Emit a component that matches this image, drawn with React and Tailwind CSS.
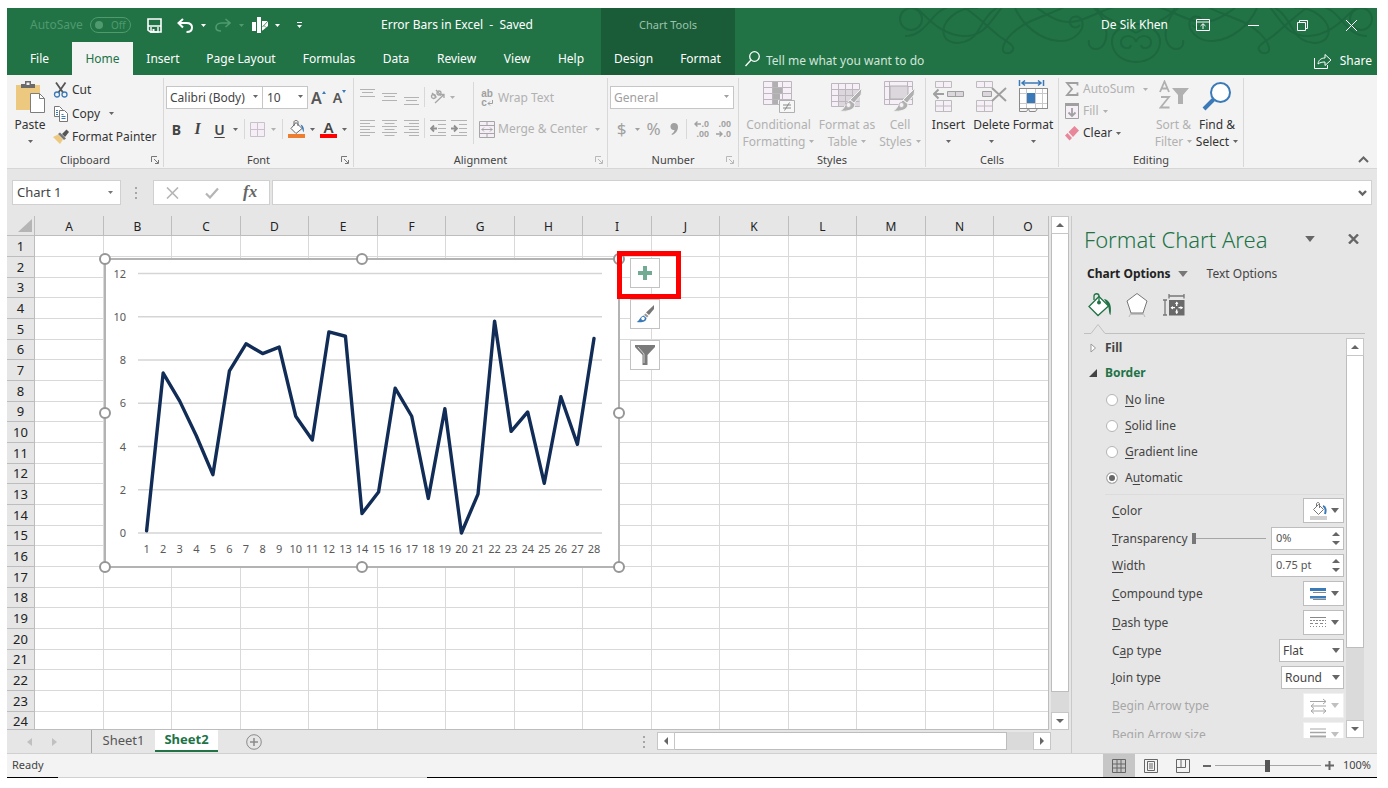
import { useState } from 'react'

const tabs = [
  { name: 'File', width: 'w-[65px]' },
  { name: 'Home', width: 'w-[61px]' },
  { name: 'Insert', width: 'w-[60px]' },
  { name: 'Page Layout', width: 'w-[96px]' },
  { name: 'Formulas', width: 'w-[80px]' },
  { name: 'Data', width: 'w-[54px]' },
  { name: 'Review', width: 'w-[67px]' },
  { name: 'View', width: 'w-[54px]' },
  { name: 'Help', width: 'w-[54px]' },
]

const columns = 'ABCDEFGHIJKLMNO'.split('')
const rows = Array.from({ length: 24 }, (_, i) => i + 1)

const series = [
  0.1, 7.4, 6.1, 4.5, 2.7, 7.5, 8.75, 8.3, 8.6, 5.4, 4.3, 9.3, 9.1, 0.9,
  1.9, 6.7, 5.4, 1.6, 5.75, 0, 1.8, 9.8, 4.7, 5.6, 2.3, 6.3, 4.1, 9,
]

const Caret = ({ className = 'text-[#666666]' }) => (
  <svg width="5" height="3" viewBox="0 0 5 3" className={`shrink-0 ${className}`}>
    <path d="M0 0h5L2.5 3z" fill="currentColor" />
  </svg>
)

const BigCaret = ({ className = 'text-[#666666]' }) => (
  <svg width="8" height="5" viewBox="0 0 8 5" className={`shrink-0 ${className}`}>
    <path d="M0 0h8L4 5z" fill="currentColor" />
  </svg>
)

/* ---------- Title bar ---------- */

const Swirls = () => (
  <svg width="482" height="56" viewBox="892 8 482 56" fill="none" stroke="#1d673e" strokeWidth="2" className="absolute right-0 top-0">
    <defs>
      <g id="swirl">
        <circle cx="908" cy="19" r="11" />
        <path d="M902 36C925 36 928 8 950 6" />
        <path d="M912 8c8 2 20 26 48 28 22 1 28-16 40-30" />
        <path d="M975 8c-20-2-38 14-34 27 4 12 26 10 34-4 6-10 10-18 20-24" />
        <path d="M962 8c10 6 24 20 34 28 10 7 16 10 14 14-3 5-11 4-10-2 1-8 12-20 28-27 16-7 28-10 36-16" />
        <path d="M1012 8c8 18 26 32 44 33 16 1 26-12 23-20-3-7-13-5-12 2 1 5 7 6 10 2" />
        <path d="M1034 8c14 10 26 18 44 12 14-5 22-10 36-14" />
        <path d="M1094 8c6 12 26 16 39 25" />
        <path d="M1086 40c-2 10 10 12 15 4 6-10 0-28-10-36" />
        <path d="M1133 42c-2-8-16-8-15 1 1 6 9 7 10 2M1133 24c-14 0-25 8-24 19 1 12 12 19 24 19" />
      </g>
    </defs>
    <use href="#swirl" />
    <use href="#swirl" transform="translate(2266 0) scale(-1 1)" />
  </svg>
)

const QuickAccess = () => (
  <div className="flex items-center h-[34px] pl-[23px] pr-[68px] text-white">
    <span className="text-[#4f9a6e]">AutoSave</span>
    <button aria-label="AutoSave off" className="ml-[7px] flex items-center w-[41px] h-4 rounded-full border border-[#4f9a6e] px-1 text-[10px] text-[#4f9a6e]">
      <span className="w-2 h-2 rounded-full bg-[#4f9a6e] mr-2" />
      Off
    </button>
    <button aria-label="Save" className="ml-4">
      <svg width="15" height="15" viewBox="0 0 15 15">
        <path d="M1 1h13v13H3.500L1 12z" fill="none" stroke="white" strokeWidth="1.600" />
        <path d="M1 8h13M4 9v5h7V9" fill="none" stroke="white" strokeWidth="1.400" />
        <path d="M5.500 11h2v3h-2z" fill="white" />
      </svg>
    </button>
    <button aria-label="Undo" className="ml-[15px]">
      <svg width="16" height="15" viewBox="0 0 16 15" fill="none" stroke="white" strokeWidth="2">
        <path d="M6 1L1.500 5 6 9.500M2 5h7.500C13 5 15 7 15 9.500S13 14 9.500 14" />
      </svg>
    </button>
    <Caret className="ml-2 text-white" />
    <button aria-label="Redo" className="ml-[9px]">
      <svg width="16" height="15" viewBox="0 0 16 15" fill="none" stroke="#4f9a6e" strokeWidth="1.600">
        <path d="M10.500 1L15 5l-4.500 4M14 5H6.500C3 5 1 7 1 9.500S3 13 6 13" />
      </svg>
    </button>
    <Caret className="ml-2 text-[#4f9a6e]" />
    <button aria-label="Chart" className="ml-2">
      <svg width="17" height="16" viewBox="0 0 17 16" fill="white">
        <path d="M0 5h4v9H0zM5 0h4v16H5zM10 4h6v5l-6 5z" />
        <path d="M10.500 10l5.500-6M12 8.500l2 2M10 14h5" stroke="#217346" strokeWidth=".8" />
      </svg>
    </button>
    <Caret className="ml-[6px] text-white" />
    <svg width="5" height="6" viewBox="0 0 5 6" fill="white" className="ml-[17px]">
      <path d="M0 0h5v1H0zM0 3h5L2.500 6z" />
    </svg>
    <span className="ml-auto whitespace-pre">Error Bars in Excel  -  Saved</span>
  </div>
)

const Header = () => (
  <header className="flex h-[67px] shrink-0 bg-[#217346] text-white">
    <div className="w-[594px] shrink-0">
      <QuickAccess />
      <nav className="flex h-[33px]">
        {tabs.map((tab) => (
          <button
            key={tab.name}
            className={`${tab.width} shrink-0 ${tab.name === 'Home' ? 'bg-[#f3f3f3] text-[#217346]' : ''}`}
          >
            {tab.name}
          </button>
        ))}
      </nav>
    </div>

    {/* Contextual chart tabs */}
    <div className="w-[134px] shrink-0 bg-[#1a5c38]">
      <div className="h-[34px] leading-[33px] text-center text-[11px] text-[#9cc3ac]">Chart Tools</div>
      <nav className="flex h-[33px]">
        <button className="w-[65px]">Design</button>
        <button className="w-[69px]">Format</button>
      </nav>
    </div>

    <div className="relative flex-1 min-w-0">
      <Swirls />
      <div className="relative flex items-center justify-end h-[34px] pr-5 gap-[38px]">
        <span className="-mr-[10px]">De Sik Khen</span>
        <button aria-label="Ribbon display options">
          <svg width="14" height="12" viewBox="0 0 14 12" fill="none" stroke="white">
            <path d="M.5.5h13v11H.500zM.5 3h13M7 10V5M4.500 7L7 4.700 9.500 7" />
          </svg>
        </button>
        <button aria-label="Minimize">
          <svg width="11" height="11" viewBox="0 0 11 11" stroke="white"><path d="M0 5.500h11" /></svg>
        </button>
        <button aria-label="Restore">
          <svg width="11" height="11" viewBox="0 0 11 11" fill="none" stroke="white">
            <path d="M.5 2.500h8v8h-8zM2.500 2.500v-2h8v8h-2" />
          </svg>
        </button>
        <button aria-label="Close">
          <svg width="11" height="11" viewBox="0 0 11 11" stroke="white"><path d="M0 0l11 11M11 0L0 11" /></svg>
        </button>
      </div>
      <div className="relative flex items-center h-[33px] pl-[10px] pr-[5px]">
        <svg width="15" height="16" viewBox="0 0 15 16" fill="none" stroke="white" strokeWidth="1.300">
          <circle cx="9.500" cy="5.500" r="4.800" />
          <path d="M6 9L.5 15" />
        </svg>
        <span className="ml-[6px] pt-1 text-[#d3e5da]">Tell me what you want to do</span>
        <button className="ml-auto flex items-center gap-2 pt-1">
          <svg width="18" height="16" viewBox="0 0 18 16" fill="none" stroke="white">
            <path d="M.5 5v10.500h13V12M4 11c.5-4 3-6 7-6V1.500L17 7l-6 5.500V9c-3 0-5 .5-7 2z" />
          </svg>
          Share
        </button>
      </div>
    </div>
  </header>
)

/* ---------- Ribbon ---------- */

const Group = ({ label, width, launcher, dim, children }) => (
  <section className={`${width} relative shrink-0 flex flex-col h-[89px] border-r border-[#d8d8d8]`}>
    <div className="flex-1 flex">{children}</div>
    <div className="h-[14px] leading-[14px] text-center text-[11px] text-[#444444]">{label}</div>
    {launcher && (
      <button aria-label={`${label} settings`} className="absolute right-1 bottom-[3px]">
        <svg width="8" height="8" viewBox="0 0 8 8" fill="none" stroke={dim ? '#b8b8b8' : '#777777'}>
          <path d="M.5 6V.500H6M3 3l4 4M7.500 4v3.500H4" />
        </svg>
      </button>
    )}
  </section>
)

const BigButton = ({ icon, lines, width, disabled, caretBelow }) => (
  <button className={`${width} shrink-0 flex flex-col items-center pt-[2px] leading-[17px] ${disabled ? 'text-[#b1b1b1]' : 'text-[#333333]'}`}>
    <span className="h-[36px]">{icon}</span>
    <span className="whitespace-nowrap">{lines[0]}</span>
    {caretBelow ? (
      <span className="flex items-center h-[17px]"><Caret /></span>
    ) : (
      <span className="flex items-center gap-1 whitespace-nowrap">
        {lines[1]}
        <Caret className={disabled ? 'text-[#b1b1b1]' : 'text-[#666666]'} />
      </span>
    )}
  </button>
)

const Divider = ({ className }) => <span className={`w-px bg-[#d8d8d8] shrink-0 ${className}`} />

const Lines = ({ d }) => (
  <svg width="15" height="18" viewBox="0 0 15 18" fill="none" stroke="#b3b3b3" className="shrink-0">
    <path d={d} />
  </svg>
)

const ClipboardGroup = () => (
  <Group label="Clipboard" width="w-[157px]" launcher>
    <BigButton
      width="w-[46px]"
      lines={['Paste']}
      caretBelow
      icon={
        <svg width="32" height="34" viewBox="0 0 32 34">
          <path d="M2 5h24v25H2z" fill="#edc87f" />
          <path d="M7 4h4V1h6v3h4v4H7z" fill="#6b6b6b" />
          <path d="M12.500 2.500h3V5h-3z" fill="#f3f3f3" />
          <path d="M16.500 13.500h9l5 5v14h-14z" fill="white" stroke="#7d7d7d" />
          <path d="M25.500 13.500v5h5" fill="none" stroke="#7d7d7d" />
        </svg>
      }
    />
    <div className="flex flex-col text-[#333333]">
      <button className="flex items-center gap-[3px] h-6">
        <svg width="16" height="16" viewBox="0 0 16 16" fill="none">
          <path d="M3 .5l7 10M12.500.500l-7 10" stroke="#555555" strokeWidth="1.800" />
          <circle cx="4" cy="12.500" r="2.500" stroke="#3b7ab8" strokeWidth="1.300" />
          <circle cx="11.500" cy="12.500" r="2.500" stroke="#3b7ab8" strokeWidth="1.300" />
        </svg>
        Cut
      </button>
      <button className="flex items-center gap-[3px] h-[23px]">
        <svg width="16" height="16" viewBox="0 0 16 16" fill="white" stroke="#777777">
          <path d="M1.500.500h5l3 3v7h-8z" />
          <path d="M6.500 4.500h5l3 3v8h-8z" />
          <path d="M3 4.500h2M3 6.500h2M3 8.500h2M8.500 8.500h2M8.500 10.500h4M8.500 12.500h4" stroke="#3b7ab8" />
        </svg>
        Copy
        <Caret className="ml-[6px] text-[#666666]" />
      </button>
      <button className="flex items-center gap-[3px] h-6">
        <svg width="16" height="16" viewBox="0 0 16 16">
          <path d="M0 8l5-2.500 5 5L7 15z" fill="#edc87f" />
          <path d="M5 5l2-1.500 6 6L11 11z" fill="#777777" />
          <path d="M9 5l4.500-4.500L16 3l-4 5z" fill="#555555" />
        </svg>
        Format Painter
      </button>
    </div>
  </Group>
)

const FontGroup = () => (
  <Group label="Font" width="w-[190px]" launcher>
    <div className="pl-[2px] pt-2 w-full">
      <div className="flex items-center h-[23px]">
        <div className="relative">
          <select aria-label="Font" className="appearance-none w-[97px] h-[23px] pl-[3px] bg-white border border-[#c6c6c6] text-[#444444]">
            <option>Calibri (Body)</option>
          </select>
          <Caret className="absolute right-[5px] top-[9px] text-[#666666]" />
        </div>
        <div className="relative -ml-px">
          <select aria-label="Font size" className="appearance-none w-[46px] h-[23px] pl-1 bg-white border border-[#c6c6c6] text-[#444444]">
            <option>10</option>
          </select>
          <Caret className="absolute right-[5px] top-[9px] text-[#666666]" />
        </div>
        <button aria-label="Increase font size" className="ml-[3px] flex font-semibold text-[16px] leading-[22px] text-[#555555]">
          A
          <svg width="4" height="3" viewBox="0 0 4 3" className="mt-1"><path d="M0 3h4L2 0z" fill="#3b7ab8" /></svg>
        </button>
        <button aria-label="Decrease font size" className="ml-[7px] flex font-semibold text-[14px] leading-[24px] text-[#555555]">
          A
          <svg width="4" height="3" viewBox="0 0 4 3" className="mt-1"><path d="M0 0h4L2 3z" fill="#3b7ab8" /></svg>
        </button>
      </div>
      <div className="flex items-center h-[22px] mt-[9px] text-[14px] text-[#444444]">
        <button className="ml-[5px] w-[11px] font-bold">B</button>
        <button className="ml-[10px] w-[11px] font-bold italic font-['Liberation_Serif'] text-[16px]">I</button>
        <button className="ml-[11px] w-[11px] font-semibold underline underline-offset-2">U</button>
        <Caret className="ml-2 text-[#666666]" />
        <Divider className="ml-[6px] h-5" />
        <svg width="15" height="15" viewBox="0 0 15 15" fill="#f5eef7" stroke="#c9c0cb" className="ml-[5px]">
          <path d="M.5.500h14v14H.500zM7.500.500v14M.5 7.500h14" />
        </svg>
        <Caret className="ml-[6px] text-[#b1b1b1]" />
        <Divider className="ml-[6px] h-5" />
        <button aria-label="Fill color" className="ml-[5px]">
          <svg width="17" height="18" viewBox="0 0 17 18">
            <path d="M8 2.500l6 6-6 5-5-5z" fill="white" stroke="#666666" />
            <path d="M6 6V2c0-2 4-2 4 0v4" fill="none" stroke="#666666" />
            <path d="M12.500 4.500c3 1 4 4 3 8-1-2-1-4-3-8z" fill="#3b7ab8" />
            <path d="M0 14h17v4H0z" fill="#ed7d31" />
          </svg>
        </button>
        <Caret className="ml-[5px] text-[#666666]" />
        <button aria-label="Font color" className="ml-[5px] flex flex-col items-center w-[17px]">
          <span className="font-semibold text-[15px] leading-[14px]">A</span>
          <span className="w-[17px] h-1 bg-[#ff0000]" />
        </button>
        <Caret className="ml-[5px] text-[#666666]" />
      </div>
    </div>
  </Group>
)

const AlignmentGroup = () => (
  <Group label="Alignment" width="w-[254px]" launcher dim>
    <div className="flex flex-col gap-[13px] pl-[6px] pt-[10px]">
      <div className="flex items-center h-[18px] gap-[5px]">
        <div className="flex gap-[7px]">
          <Lines d="M0 1.500h15M2 4.500h11M0 8.500h15" />
          <Lines d="M0 5.500h15M2 8.500h11M0 12.500h15" />
          <Lines d="M0 9.500h15M2 12.500h11M0 16.500h15" />
        </div>
        <Divider className="h-5" />
        <svg width="15" height="16" viewBox="0 0 15 16" fill="none" stroke="#a6a6a6" strokeWidth="1.300" className="shrink-0">
          <circle cx="3.500" cy="7.500" r="2" />
          <path d="M2 4l4.500 4.500M6 1l5 5.500" />
          <circle cx="9" cy="4" r="2" />
          <path d="M5 14l9-8.500M14 9V5.500h-3.500" />
        </svg>
        <Caret className="text-[#b1b1b1]" />
      </div>
      <div className="flex items-center h-[18px] gap-[5px]">
        <div className="flex gap-[7px]">
          <Lines d="M0 1.500h15M0 4.500h10M0 7.500h15M0 10.500h10M0 13.500h15M0 16.500h10" />
          <Lines d="M0 1.500h15M2.500 4.500h10M0 7.500h15M2.500 10.500h10M0 13.500h15M2.500 16.500h10" />
          <Lines d="M0 1.500h15M5 4.500h10M0 7.500h15M5 10.500h10M0 13.500h15M5 16.500h10" />
        </div>
        <Divider className="h-5" />
        <svg width="16" height="18" viewBox="0 0 16 18" fill="none" stroke="#b3b3b3" className="shrink-0">
          <path d="M0 1.500h16M8 5.500h8M8 9.500h8M8 13.500h8M0 16.500h16" />
          <path d="M1 9.500h6M4 6.500L1 9.500l3 3" stroke="#8f8f8f" strokeWidth="1.800" />
        </svg>
        <svg width="16" height="18" viewBox="0 0 16 18" fill="none" stroke="#b3b3b3" className="shrink-0">
          <path d="M0 1.500h16M8 5.500h8M8 9.500h8M8 13.500h8M0 16.500h16" />
          <path d="M0 9.500h6M3 6.500l3 3-3 3" stroke="#8f8f8f" strokeWidth="1.800" />
        </svg>
      </div>
    </div>
    <Divider className="mt-1 ml-[6px] h-[62px]" />
    <div className="flex flex-col gap-[11px] pl-[5px] pt-[10px] text-[#b1b1b1]">
      <button className="flex items-center h-5 gap-[3px]">
        <span className="w-4 flex flex-col items-center font-['Liberation_Sans'] text-[10px] font-bold leading-[9px] text-[#a0a0a0]">
          <span>ab</span>
          <span className="flex items-center">
            c
            <svg width="6" height="6" viewBox="0 0 6 6" fill="none" stroke="#a0a0a0"><path d="M5.500 0v3.500H1M3 1.500l-2 2 2 2" /></svg>
          </span>
        </span>
        Wrap Text
      </button>
      <button className="flex items-center h-5 gap-[3px] whitespace-nowrap">
        <svg width="16" height="17" viewBox="0 0 16 17" fill="#f5eef7" stroke="#a6a6a6">
          <path d="M.5.500h15v16H.500zM.5 4.500h15M.5 12.500h15M8 .5v4M8 12.500v4" />
          <path d="M2.500 8.500h11M5 6.500l-2 2 2 2M11 6.500l2 2-2 2" fill="none" />
        </svg>
        Merge &amp; Center
        <Caret className="ml-1 text-[#b1b1b1]" />
      </button>
    </div>
  </Group>
)

const NumberGroup = () => (
  <Group label="Number" width="w-[131px]" launcher dim>
    <div className="pl-[2px] pt-2 w-full">
      <div className="relative w-[124px]">
        <select aria-label="Number format" className="appearance-none w-full h-[23px] pl-[3px] bg-white border border-[#c6c6c6] text-[#a0a0a0]">
          <option>General</option>
        </select>
        <Caret className="absolute right-[5px] top-[9px] text-[#a0a0a0]" />
      </div>
      <div className="flex items-center h-[22px] mt-[9px] text-[17px] text-[#a0a0a0]">
        <button className="ml-[6px] w-[11px]">$</button>
        <Caret className="ml-2 text-[#a0a0a0]" />
        <button className="ml-[5px] w-[17px]">%</button>
        <button aria-label="Comma style" className="ml-2">
          <svg width="8" height="12" viewBox="0 0 8 12" fill="#a0a0a0">
            <path d="M4 0c2.500 0 4 1.500 4 4 0 4-3 7-6 8l-.5-1C3 10 4.500 8.500 4.500 7 2 7.500.5 6 .5 3.500.5 1.500 2 0 4 0z" />
          </svg>
        </button>
        <Divider className="ml-2 h-5" />
        <button aria-label="Increase decimal" className="ml-[6px] w-4 flex flex-col items-end font-['Liberation_Sans'] text-[9px] font-bold leading-[10px]">
          <span className="flex items-center">
            <svg width="7" height="6" viewBox="0 0 7 6" fill="none" stroke="#a0a0a0" strokeWidth="1.400"><path d="M1 3h6M3.500.500L1 3l2.500 2.500" /></svg>
            .0
          </span>
          <span>.00</span>
        </button>
        <button aria-label="Decrease decimal" className="ml-[6px] w-4 flex flex-col items-end font-['Liberation_Sans'] text-[9px] font-bold leading-[10px]">
          <span>.00</span>
          <span className="flex items-center">
            <svg width="7" height="6" viewBox="0 0 7 6" fill="none" stroke="#a0a0a0" strokeWidth="1.400"><path d="M0 3h6M3.500.500L6 3 3.500 5.500" /></svg>
            .0
          </span>
        </button>
      </div>
    </div>
  </Group>
)

const Brush = () => (
  <>
    <path d="M31 8l-1 7-7 8-4-3z" fill="#b0b0b0" stroke="#f3f3f3" />
    <path d="M19 20l5 4c0 6-8 8-15 7 5-2 5-8 10-11z" fill="#b0b0b0" stroke="#f3f3f3" />
    <circle cx="17.500" cy="25" r="2.500" fill="#f3f3f3" />
  </>
)

const StylesGroup = () => (
  <Group label="Styles" width="w-[187px]">
    <BigButton
      width="w-[79px]"
      disabled
      lines={['Conditional', 'Formatting']}
      icon={
        <svg width="32" height="33" viewBox="0 0 32 33" fill="#f7eff8" stroke="#bdb6be">
          <path d="M.5 1.500h28v23H.500zM.5 7.500h28M.5 13.500h28M.5 19.500h28M9.500 1.500v23M19.500 1.500v23" />
          <path d="M10 2h5v5h-5zM10 8h9v5h-9zM10 14h7v5h-7zM10 20h5v4h-5z" fill="#b0b0b0" stroke="none" />
          <path d="M16.500 20.500h15v12h-15z" fill="#f7f7f7" stroke="#b0b0b0" />
          <path d="M20 25h8M20 28h8M26.500 22.500l-5 8" stroke="#888888" />
        </svg>
      }
    />
    <BigButton
      width="w-[58px]"
      disabled
      lines={['Format as', 'Table']}
      icon={
        <svg width="32" height="33" viewBox="0 0 32 33" fill="#f7eff8" stroke="#bdb6be">
          <path d="M.5 3.500h28v23H.500z" />
          <path d="M8 9h21v17H8z" fill="#dcd6dd" stroke="none" />
          <path d="M.5 9.500h28M.5 15.500h28M.5 21.500h28M7.500 3.500v23M14.500 3.500v23M21.500 3.500v23" fill="none" />
          <Brush />
        </svg>
      }
    />
    <BigButton
      width="w-[48px]"
      disabled
      lines={['Cell', 'Styles']}
      icon={
        <svg width="32" height="33" viewBox="0 0 32 33" fill="#f7eff8" stroke="#bdb6be">
          <path d="M.5 1.500h28v23H.500zM.5 6.500h28M.5 19.500h28M5.500 1.500v23M23.500 1.500v23" />
          <path d="M6 6h18v13H6z" fill="#dcd6dd" stroke="#b0b0b0" />
          <Brush />
        </svg>
      }
    />
  </Group>
)

const CellsGroup = () => (
  <Group label="Cells" width="w-[133px]">
    <BigButton
      width="w-[45px]"
      lines={['Insert']}
      caretBelow
      icon={
        <svg width="31" height="33" viewBox="0 0 31 33" fill="#f7eff8" stroke="#bcbcbc">
          <path d="M2.500 1.500h16v6h-16zM10.500 1.500v6M2.500 20.500h16v11h-16zM10.500 20.500v11M2.500 26h16" />
          <path d="M14.500 11.500h16v5h-16zM22.500 11.500v5" fill="#dcd6dd" stroke="#a0a0a0" />
          <path d="M1 14h10M5.500 9.500L1 14l4.500 4.500" fill="none" stroke="#a0a0a0" strokeWidth="2" />
        </svg>
      }
    />
    <BigButton
      width="w-[41px]"
      lines={['Delete']}
      caretBelow
      icon={
        <svg width="31" height="33" viewBox="0 0 31 33" fill="#f7eff8" stroke="#bcbcbc">
          <path d="M.5 1.500h16v6h-16zM8.500 1.500v6M.5 20.500h16v11h-16zM8.500 20.500v11M.5 26h16" />
          <path d="M6.500 11.500h9v5h-9z" fill="#dcd6dd" stroke="#a0a0a0" />
          <path d="M16 8l14 13M30 8L16 21" fill="none" stroke="#a0a0a0" strokeWidth="2" />
        </svg>
      }
    />
    <BigButton
      width="w-[42px]"
      lines={['Format']}
      caretBelow
      icon={
        <svg width="31" height="33" viewBox="0 0 31 33" fill="white" stroke="#8a8a8a">
          <path d="M1.500 8.500h28v20h-28z" />
          <path d="M1.500 13.500h28M1.500 23.500h28M8.500 8.500v20M17.500 8.500v20M24.500 8.500v20" stroke="#c8c8c8" />
          <path d="M1.500 8.500h28v20h-28zM1.500 28.500v3h7l2-3 1 3h6l2-3" fill="none" />
          <path d="M9 13h8v10H9z" fill="#3b7ab8" stroke="none" />
          <path d="M1.500 0v6M25.500 0v6M4 3h19M7 .5L4 3l3 2.500M20 .5L23 3l-3 2.500" fill="none" stroke="#3b7ab8" strokeWidth="1.500" />
        </svg>
      }
    />
  </Group>
)

const EditingGroup = () => (
  <Group label="Editing" width="w-[185px]">
    <div className="flex flex-col pl-[6px] w-[93px] text-[#b1b1b1]">
      <button className="flex items-center gap-1 h-[22px]">
        <svg width="14" height="14" viewBox="0 0 14 14" fill="none" stroke="#a0a0a0" strokeWidth="1.800">
          <path d="M12.500 3.500V1H2l5 6-5 6h10.500v-2.500" />
        </svg>
        AutoSum
        <Caret className="ml-1 text-[#b1b1b1]" />
      </button>
      <button className="flex items-center gap-1 h-[22px]">
        <svg width="14" height="16" viewBox="0 0 14 16" fill="#f7eff8" stroke="#a0a0a0">
          <path d="M.5.500h13v15H.500z" />
          <path d="M0 1.500h14" strokeWidth="3" />
          <path d="M7 5v8M3.500 9.500L7 13l3.500-3.500" fill="none" strokeWidth="1.800" />
        </svg>
        Fill
        <Caret className="text-[#b1b1b1]" />
      </button>
      <button className="flex items-center gap-1 h-[22px] text-[#333333]">
        <svg width="14" height="15" viewBox="0 0 14 15" fill="#e8879a">
          <path d="M9.500 0L14 4.500 8 11 3.500 6zM2.500 7L7 12l-2.500 2.500L0 9.500z" />
        </svg>
        Clear
        <Caret />
      </button>
    </div>
    <BigButton
      width="w-[43px]"
      disabled
      lines={['Sort &', 'Filter']}
      icon={
        <svg width="30" height="32" viewBox="0 0 30 32" fill="none" stroke="#b0b0b0" strokeWidth="1.800">
          <path d="M1 12L5.500 1.500 10 12M2.500 8.500h6M2 17h8L1.500 27.500H10.500" />
          <path d="M13 8h17l-6 7v9h-5v-9z" fill="#b0b0b0" stroke="none" />
        </svg>
      }
    />
    <BigButton
      width="w-[44px]"
      lines={['Find &', 'Select']}
      icon={
        <svg width="30" height="32" viewBox="0 0 30 32" fill="none">
          <circle cx="18.500" cy="12.500" r="9.500" fill="white" stroke="#3b7ab8" strokeWidth="2" />
          <path d="M11.500 19.500L2 29" stroke="#3b7ab8" strokeWidth="4" />
        </svg>
      }
    />
  </Group>
)

const Ribbon = () => (
  <div className="relative flex shrink-0 h-[94px] pt-[3px] bg-[#f3f3f3] border-b border-[#d6d6d6]">
    <ClipboardGroup />
    <FontGroup />
    <AlignmentGroup />
    <NumberGroup />
    <StylesGroup />
    <CellsGroup />
    <EditingGroup />
    <button aria-label="Collapse ribbon" className="absolute right-2 bottom-[5px]">
      <svg width="11" height="7" viewBox="0 0 11 7" fill="none" stroke="#666666" strokeWidth="2"><path d="M1 6l4.500-4.500L10 6" /></svg>
    </button>
  </div>
)

const FormulaBar = () => (
  <div className="flex shrink-0 h-[47px] pt-[11px] pl-[5px] pr-[5px] bg-[#e6e6e6]">
    <div className="relative">
      <input aria-label="Name box" defaultValue="Chart 1" className="w-[109px] h-[25px] px-1 pb-[2px] bg-white border border-[#d0d0d0] text-[13px] text-[#444444]" />
      <Caret className="absolute right-[8px] top-[11px] text-[#777777]" />
    </div>
    <svg width="2" height="12" viewBox="0 0 2 12" fill="#a6a6a6" className="ml-[14px] mt-[7px]">
      <path d="M0 0h2v2H0zM0 5h2v2H0zM0 10h2v2H0z" />
    </svg>
    <div className="flex items-center ml-4 w-[117px] h-[25px] pl-3 bg-white border border-[#d0d0d0]">
      <button aria-label="Cancel">
        <svg width="13" height="12" viewBox="0 0 13 12" stroke="#b5b5b5" strokeWidth="1.600"><path d="M1 .5l11 11M12 .5L1 11.500" /></svg>
      </button>
      <button aria-label="Enter" className="ml-[26px]">
        <svg width="14" height="12" viewBox="0 0 14 12" fill="none" stroke="#b5b5b5" strokeWidth="2.200"><path d="M1 6.500l4 4L13 1.500" /></svg>
      </button>
      <button className="ml-6 pb-[2px] font-['Liberation_Serif'] italic font-bold text-[17px] text-[#666666]">fx</button>
    </div>
    <div className="relative flex-1 ml-[2px]">
      <input aria-label="Formula" className="w-full h-[25px] px-1 bg-white border border-[#d0d0d0]" />
      <svg width="9" height="7" viewBox="0 0 9 7" fill="none" stroke="#666666" strokeWidth="2.400" className="absolute right-[5px] top-[10px]">
        <path d="M1 1l3.500 3.500L8 1" />
      </svg>
    </div>
  </div>
)

/* ---------- Sheet ---------- */

const LineChart = () => {
  const x = (i) => 48.600 + i * 16.570
  const y = (v) => 281 - v * 21.620
  return (
    <svg width="528" height="322" viewBox="0 0 528 322" className="block">
      <rect x="7" y="7" width="514" height="308" fill="white" stroke="#b3b3b3" strokeWidth="2" />
      {[0, 2, 4, 6, 8, 10, 12].map((v) => (
        <g key={v}>
          <path d={`M40 ${y(v)}H504`} stroke="#d5d5d5" strokeWidth="1.500" />
          <text x="28" y={y(v) + 4} textAnchor="end" fontSize="11" fill="#595959">{v}</text>
        </g>
      ))}
      {series.map((_, i) => (
        <text key={i} x={x(i)} y="301" textAnchor="middle" fontSize="11" fill="#595959">{i + 1}</text>
      ))}
      <polyline
        points={series.map((v, i) => `${x(i)},${y(v)}`).join(' ')}
        fill="none"
        stroke="#112d57"
        strokeWidth="3.400"
        strokeLinejoin="round"
        strokeLinecap="round"
      />
      {[[7, 7], [264, 7], [521, 7], [7, 161], [521, 161], [7, 315], [264, 315], [521, 315]].map(([cx, cy]) => (
        <circle key={`${cx}-${cy}`} cx={cx} cy={cy} r="5" fill="white" stroke="#969696" strokeWidth="2" />
      ))}
    </svg>
  )
}

const ChartObject = () => (
  <div className="absolute left-[91px] top-[36px] flex items-start gap-1">
    <LineChart />
    <div className="flex flex-col gap-[11px] pt-[6px]">
      <button aria-label="Chart elements" className="w-[30px] h-[30px] flex items-center justify-center bg-white border border-[#c2c2c2]">
        <svg width="14" height="14" viewBox="0 0 14 14" fill="#71ab93"><path d="M5 0h4v5h5v4H9v5H5V9H0V5h5z" /></svg>
      </button>
      <button aria-label="Chart styles" className="w-[30px] h-[30px] flex items-center justify-center bg-white border border-[#c2c2c2]">
        <svg width="18" height="18" viewBox="0 0 18 18">
          <path d="M18 0v4l-5 6-3-2.500z" fill="#777777" />
          <path d="M9.500 8.500l3 2.500-1.500 1.500L8 10z" fill="#999999" />
          <path d="M7.500 10.500l3 2.500c0 4-5 5-10 4 3-1 3-5 7-6.500z" fill="#3b7ab8" />
          <circle cx="7" cy="13.500" r="1.700" fill="white" />
        </svg>
      </button>
      <button aria-label="Chart filters" className="w-[30px] h-[30px] flex items-center justify-center bg-white border border-[#c2c2c2]">
        <svg width="20" height="20" viewBox="0 0 20 20">
          <path d="M0 0h20v2l-7.500 8v10h-5V10L0 2z" fill="#7a7a7a" />
          <path d="M3 2l6 7v9" fill="none" stroke="#d0d0d0" />
        </svg>
      </button>
    </div>
    {/* Highlight round the chart elements button */}
    <div className="absolute -right-[21px] -top-[1px] w-[64px] h-[48px] border-[5px] border-[#ff0000]" />
  </div>
)

const Grid = () => (
  <div className="relative flex-1 min-w-0 overflow-hidden bg-white border-r border-b border-[#bdbdbd]">
    <table className="table-fixed border-separate border-spacing-0 w-[1056px] text-[13px] text-[#222222]">
      <colgroup>
        <col className="w-[28px]" />
        {columns.map((c, i) => (
          <col key={c} className={i % 2 ? 'w-[68px]' : 'w-[69px]'} />
        ))}
      </colgroup>
      <thead>
        <tr className="h-5 bg-[#e6e6e6] leading-[17px]">
          <th className="p-0 border-r border-b border-[#bdbdbd]">
            <svg width="14" height="13" viewBox="0 0 14 13" className="ml-auto mr-[2px]"><path d="M14 0v13H0z" fill="#b5b5b5" /></svg>
          </th>
          {columns.map((c) => (
            <th key={c} scope="col" className="p-0 pt-[2px] font-normal text-[12px] border-r border-b border-[#bdbdbd]">{c}</th>
          ))}
        </tr>
      </thead>
      <tbody>
        {rows.map((r) => (
          <tr key={r} className={`leading-[19px] ${r % 3 ? 'h-[21px]' : 'h-5'}`}>
            <th scope="row" className="p-0 font-normal bg-[#e6e6e6] border-r border-b border-[#bdbdbd]">{r}</th>
            {columns.map((c) => (
              <td key={c} className="p-0 border-r border-b border-[#d9d9d9]" />
            ))}
          </tr>
        ))}
      </tbody>
    </table>
    <ChartObject />
  </div>
)

const Arrow = ({ d }) => (
  <svg width="8" height="8" viewBox="0 0 8 8"><path d={d} fill="#666666" /></svg>
)

const VScroll = ({ thumb }) => (
  <div className="flex flex-col w-[18px] shrink-0 bg-[#dadada]">
    <button aria-label="Scroll up" className="h-[18px] shrink-0 flex items-center justify-center bg-white border border-[#c6c6c6]">
      <Arrow d="M0 6h8L4 2z" />
    </button>
    <div className={`${thumb} bg-white border border-t-0 border-[#bdbdbd]`} />
    <button aria-label="Scroll down" className="mt-auto h-[18px] shrink-0 flex items-center justify-center bg-white border border-[#c6c6c6]">
      <Arrow d="M0 2h8L4 6z" />
    </button>
  </div>
)

const SheetTabs = () => (
  <div className="flex h-[23px] shrink-0 pr-5 text-[13px] text-[#555555]">
    <div className="flex items-center gap-5 w-[85px] pl-5 border-r border-[#a6a6a6]">
      <svg width="5" height="8" viewBox="0 0 5 8" fill="#c0c0c0"><path d="M5 0v8L0 4z" /></svg>
      <svg width="5" height="8" viewBox="0 0 5 8" fill="#c0c0c0"><path d="M0 0v8l5-4z" /></svg>
    </div>
    <button className="w-[63px] pb-[2px]">Sheet1</button>
    <button className="w-[63px] h-[22px] bg-white font-bold text-[#217346] border-b-2 border-[#217346]">Sheet2</button>
    <button aria-label="New sheet" className="ml-7">
      <svg width="16" height="16" viewBox="0 0 16 16" fill="none" stroke="#8a8a8a">
        <circle cx="8" cy="8" r="7.300" />
        <path d="M8 4v8M4 8h8" strokeWidth="1.500" />
      </svg>
    </button>
    <svg width="2" height="12" viewBox="0 0 2 12" fill="#a6a6a6" className="ml-auto mt-[6px]">
      <path d="M0 0h2v2H0zM0 5h2v2H0zM0 10h2v2H0z" />
    </svg>
    <div className="flex ml-3 mt-[2px] w-[394px] h-[18px] bg-[#dadada]">
      <button aria-label="Scroll left" className="w-[18px] flex items-center justify-center bg-white border border-[#c6c6c6]">
        <Arrow d="M6 0v8L2 4z" />
      </button>
      <div className="w-[332px] bg-white border border-l-0 border-[#bdbdbd]" />
      <button aria-label="Scroll right" className="ml-auto w-[18px] flex items-center justify-center bg-white border border-[#c6c6c6]">
        <Arrow d="M2 0v8l4-4z" />
      </button>
    </div>
  </div>
)

/* ---------- Format pane ---------- */

const Label = ({ text, index = 0 }) => (
  <>
    {text.slice(0, index)}
    <span className="underline underline-offset-2">{text[index]}</span>
    {text.slice(index + 1)}
  </>
)

const Row = ({ text, index, id, disabled, tall, children }) => (
  <div className={`flex items-center justify-between ${tall ? 'h-[25px]' : 'h-[23px]'} ${disabled ? 'text-[#a6a6a6]' : 'text-[#444444]'}`}>
    <label htmlFor={id}><Label text={text} index={index} /></label>
    {children}
  </div>
)

const DropButton = ({ id, disabled, children }) => (
  <button
    id={id}
    className={`flex items-center justify-between w-[41px] h-[25px] pl-[6px] pr-1 bg-white border ${disabled ? 'border-[#f0f0f0]' : 'border-[#bdbdbd]'}`}
  >
    {children}
    <BigCaret className={disabled ? 'text-[#c0c0c0]' : 'text-[#666666]'} />
  </button>
)

const Spinner = ({ id, value }) => (
  <div className="relative">
    <input id={id} defaultValue={value} className="w-[73px] h-[23px] pl-1 pb-[2px] bg-white border border-[#bdbdbd] text-[11px] text-[#555555]" />
    <svg width="8" height="13" viewBox="0 0 8 13" fill="#666666" className="absolute right-1 top-[5px]">
      <path d="M0 4h8L4 0zM0 9h8l-4 4z" />
    </svg>
  </div>
)

const TypeSelect = ({ id, width, value }) => (
  <div className="relative">
    <select id={id} className={`appearance-none ${width} h-[23px] pl-[3px] bg-white border border-[#bdbdbd] text-[#444444]`}>
      <option>{value}</option>
    </select>
    <BigCaret className="absolute right-1 top-[9px] text-[#666666]" />
  </div>
)

const FormatPane = () => {
  const [line, setLine] = useState('Automatic')
  const lineOptions = [
    { name: 'No line', index: 0 },
    { name: 'Solid line', index: 0 },
    { name: 'Gradient line', index: 0 },
    { name: 'Automatic', index: 1 },
  ]

  return (
    <aside className="flex flex-col w-[306px] shrink-0 pl-3 pr-[13px] pb-[15px] border-l border-[#c9c9c9]">
      <div className="flex items-center h-[46px]">
        <h2 className="text-[22px] font-light text-[#217346]">Format Chart Area</h2>
        <button aria-label="Pane options" className="ml-auto"><BigCaret className="w-[10px] h-[6px] text-[#666666]" /></button>
        <button aria-label="Close pane" className="ml-[33px] mr-[5px]">
          <svg width="11" height="10" viewBox="0 0 11 10" stroke="#666666" strokeWidth="2.400"><path d="M1 .5l9 9M10 .5l-9 9" /></svg>
        </button>
      </div>
      <div className="flex items-center h-6 pl-[3px]">
        <button className="flex items-center gap-[7px] font-bold text-[#222222]">
          Chart Options
          <BigCaret className="w-[10px] h-[6px] text-[#777777]" />
        </button>
        <button className="ml-[19px] text-[#444444]">Text Options</button>
      </div>
      <div className="flex items-center gap-[14px] h-[37px] pl-1">
        <button aria-label="Fill and line">
          <svg width="24" height="24" viewBox="0 0 24 24" fill="none" stroke="#217346" strokeWidth="1.300">
            <path d="M11 3.500L20.500 13 10 22.500 1 13.500z" fill="white" />
            <path d="M6 7V3c0-3 5-3 5 0v6" />
            <circle cx="11" cy="9.500" r="1.300" fill="#217346" />
            <path d="M16 6c6 1 8 7 6.500 16-2-1-1-7-3-10z" fill="#217346" stroke="none" />
          </svg>
        </button>
        <button aria-label="Effects">
          <svg width="22" height="26" viewBox="0 0 22 26" fill="none" stroke="#777777">
            <path d="M11 1.500l10 7.500-4 12H5L1 9z" fill="white" />
            <path d="M5 21l-2 4M17 21l2 4" stroke="#bbbbbb" />
            <path d="M5 22h12" stroke="#999999" />
          </svg>
        </button>
        <button aria-label="Size and properties">
          <svg width="23" height="24" viewBox="0 0 23 24" fill="none" stroke="#777777" strokeWidth="1.300">
            <path d="M7 3h15M7 1v4.500M22 1v4.500M3 7v15M1 7h4M1 22h4" />
            <path d="M7 7h15.500v15.500H7z" fill="#6a6a6a" stroke="none" />
            <path d="M14.700 9v4M14.700 16.500v4M9 14.700h4M16.500 14.700h4" stroke="white" />
            <path d="M13 11l1.700-2.500L16.400 11zM13 18.500l1.700 2.500 1.700-2.500zM11 13l-2.500 1.700L11 16.400zM18.500 13l2.500 1.700-2.500 1.700z" fill="white" stroke="none" />
          </svg>
        </button>
      </div>
      <svg width="281" height="12" viewBox="0 0 281 12" fill="none" stroke="#c0c0c0" className="shrink-0">
        <path d="M0 10.500h7l7-9 7 9h260" />
      </svg>

      <div className="flex flex-1 min-h-0 pt-[3px]">
        <div className="flex-1 overflow-hidden pl-[5px] pr-[2px]">
          <button className="flex items-center gap-2 h-5 font-bold text-[#444444]">
            <svg width="8" height="10" viewBox="0 0 8 10" fill="white" stroke="#999999"><path d="M2 1l4.500 4L2 9z" /></svg>
            Fill
          </button>
          <button className="flex items-center gap-2 h-[18px] mt-[6px] font-bold text-[#217346]">
            <svg width="8" height="8" viewBox="0 0 8 8"><path d="M8 0v8H0z" fill="#444444" /></svg>
            Border
          </button>
          <div className="flex flex-col mt-[5px] pl-[17px] text-[#444444]">
            {lineOptions.map((option) => (
              <label key={option.name} className="flex items-center gap-[7px] h-[26px]">
                <input
                  type="radio"
                  name="line"
                  checked={line === option.name}
                  onChange={() => setLine(option.name)}
                  className="appearance-none w-3 h-3 rounded-full bg-white border border-[#b5b5b5] checked:bg-[#666666] checked:shadow-[inset_0_0_0_2px_white]"
                />
                <span><Label text={option.name} index={option.index} /></span>
              </label>
            ))}
          </div>
          <div className="ml-4 mt-[3px] border-t border-[#dcdcdc]" />
          <div className="flex flex-col gap-1 pt-[3px] pl-[23px]">
            <Row text="Color" id="color" tall>
              <DropButton id="color">
                <svg width="18" height="18" viewBox="0 0 18 18" fill="none" stroke="#777777">
                  <path d="M8.500 2.500l5 5-5 5-5-5z" />
                  <path d="M6.500 5V2c0-2 3-2 3 0v4" />
                  <path d="M13 4c3 1 3 5 2 8" stroke="#3b7ab8" strokeWidth="2" />
                  <path d="M0 16h17" stroke="#d0d0d0" strokeWidth="4" />
                </svg>
              </DropButton>
            </Row>
            <Row text="Transparency" id="transparency">
              <input
                type="range"
                aria-label="Transparency slider"
                defaultValue="0"
                className="appearance-none w-[74px] h-3 ml-auto mr-[5px] bg-transparent bg-[linear-gradient(#a6a6a6,#a6a6a6)] bg-[length:100%_1px] bg-center bg-no-repeat [&::-webkit-slider-thumb]:appearance-none [&::-webkit-slider-thumb]:w-1 [&::-webkit-slider-thumb]:h-[11px] [&::-webkit-slider-thumb]:bg-[#777777]"
              />
              <Spinner id="transparency" value="0%" />
            </Row>
            <Row text="Width" id="width">
              <Spinner id="width" value="0.75 pt" />
            </Row>
            <Row text="Compound type" id="compound" tall>
              <DropButton id="compound">
                <svg width="17" height="12" viewBox="0 0 17 12">
                  <path d="M0 0h16v3H0zM0 8h16v2.500H0z" fill="#3b7ab8" />
                  <path d="M3 4h13v1H3zM3 11h13v1H3z" fill="#888888" />
                </svg>
              </DropButton>
            </Row>
            <Row text="Dash type" id="dash" tall>
              <DropButton id="dash">
                <svg width="17" height="11" viewBox="0 0 17 11" stroke="#888888">
                  <path d="M0 .5h16" />
                  <path d="M0 3.500h16" strokeDasharray="2 1" />
                  <path d="M0 6.500h16" strokeDasharray="3 2" />
                  <path d="M0 9.500h16" strokeDasharray="1 2" />
                </svg>
              </DropButton>
            </Row>
            <Row text="Cap type" index={1} id="cap">
              <TypeSelect id="cap" width="w-[65px]" value="Flat" />
            </Row>
            <Row text="Join type" id="join">
              <TypeSelect id="join" width="w-[63px]" value="Round" />
            </Row>
            <Row text="Begin Arrow type" id="arrow-type" disabled tall>
              <DropButton id="arrow-type" disabled>
                <svg width="18" height="16" viewBox="0 0 18 16" fill="none" stroke="#a6a6a6">
                  <path d="M0 3.500h16M13 1l3 2.500L13 6M2 8h14M4 5.500L1 8l3 2.500M1 13h15M4 10.500L1 13l3 2.500M13 10.500l3 2.500-3 2.500" />
                </svg>
              </DropButton>
            </Row>
            <Row text="Begin Arrow size" id="arrow-size" disabled tall>
              <DropButton id="arrow-size" disabled>
                <svg width="17" height="14" viewBox="0 0 17 14" stroke="#a6a6a6">
                  <path d="M0 1h16" />
                  <path d="M0 4.500h16" strokeWidth="1.500" />
                  <path d="M0 8.500h16M0 12.500h16" strokeWidth="2" />
                </svg>
              </DropButton>
            </Row>
          </div>
        </div>
        <VScroll thumb="h-[292px]" />
      </div>
    </aside>
  )
}

/* ---------- Status bar ---------- */

const StatusBar = () => (
  <footer className="flex items-center shrink-0 h-6 pl-[5px] pr-[6px] bg-[#f3f3f3] border-t border-[#d0d0d0] text-[11px] text-[#444444]">
    Ready
    <div className="flex items-center ml-auto h-full">
      <button aria-label="Normal view" className="w-8 h-full flex items-center justify-center bg-[#c6c6c6]">
        <svg width="14" height="14" viewBox="0 0 14 14" fill="none" stroke="#666666"><path d="M.5.500h13v13H.500zM.5 5h13M.5 9h13M5 .5v13M9 .5v13" /></svg>
      </button>
      <button aria-label="Page layout view" className="w-8 h-full flex items-center justify-center">
        <svg width="14" height="14" viewBox="0 0 14 14" fill="none" stroke="#666666"><path d="M.5.500h13v13H.500zM3.500 2.500h7v9h-7zM5 5h4M5 7h4M5 9h4" /></svg>
      </button>
      <button aria-label="Page break view" className="w-8 h-full flex items-center justify-center">
        <svg width="14" height="14" viewBox="0 0 14 14" fill="none" stroke="#666666"><path d="M.5.500h13v13H.500zM.5 8.500h9v-8M5 .5v8" /></svg>
      </button>
      <button aria-label="Zoom out" className="ml-1 w-2 h-[2px] bg-[#666666]" />
      <input
        type="range"
        aria-label="Zoom"
        defaultValue="50"
        className="appearance-none w-[106px] h-3 mx-1 bg-transparent bg-[linear-gradient(#a6a6a6,#a6a6a6)] bg-[length:100%_1px] bg-center bg-no-repeat [&::-webkit-slider-thumb]:appearance-none [&::-webkit-slider-thumb]:w-[5px] [&::-webkit-slider-thumb]:h-3 [&::-webkit-slider-thumb]:bg-[#555555]"
      />
      <button aria-label="Zoom in">
        <svg width="9" height="9" viewBox="0 0 9 9" stroke="#666666" strokeWidth="2"><path d="M4.500 0v9M0 4.500h9" /></svg>
      </button>
      <span className="ml-[9px]">100%</span>
    </div>
  </footer>
)

const App = () => (
  <div className="h-screen bg-white pt-2 pb-[10px] pl-[7px] pr-[11px] font-['Noto_Sans',sans-serif] text-[12px]">
    <div className="flex flex-col h-full overflow-hidden bg-[#e6e6e6]">
      <Header />
      <Ribbon />
      <FormulaBar />
      <main className="flex flex-1 min-h-0">
        <div className="flex flex-col flex-1 min-w-0">
          <div className="flex flex-1 min-h-0 gap-[2px] pr-[2px]">
            <Grid />
            <VScroll thumb="h-[458px]" />
          </div>
          <SheetTabs />
        </div>
        <FormatPane />
      </main>
      <StatusBar />
      {/* Bottom window edge */}
      <div className="flex h-px shrink-0 bg-black">
        <div className="ml-[51px] w-[369px] bg-[#d0d0d0]" />
      </div>
    </div>
  </div>
)

export default App
